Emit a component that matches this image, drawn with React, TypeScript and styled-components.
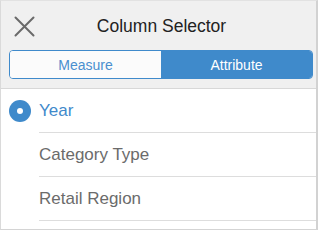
import { createGlobalStyle, styled } from "styled-components";

const GlobalStyle = createGlobalStyle`
  html, body {
    margin: 0;
    padding: 0;
    background: #ffffff;
  }
  body {
    font-family: "Liberation Sans", Arial, sans-serif;
  }
`;

const columns = ["Year", "Category Type", "Retail Region"];

export default function App() {
  const selected = "Year";

  return (
    <>
      <GlobalStyle />
      <Frame>
        <Header>
          <TopRow>
            <CloseButton aria-label="Close">
              <svg width="21" height="21" viewBox="0 0 21 21">
                <path
                  d="M1.5 1.5 L19.5 19.5 M19.5 1.5 L1.5 19.5"
                  stroke="#6a6a6a"
                  strokeWidth="2"
                  strokeLinecap="round"
                  fill="none"
                />
              </svg>
            </CloseButton>
            <Title>Column Selector</Title>
          </TopRow>
          <Segmented>
            <Segment $active={false}>Measure</Segment>
            <Segment $active={true}>Attribute</Segment>
          </Segmented>
        </Header>
        <List>
          {columns.map((name) => (
            <Row key={name}>
              <Gutter>{name === selected && <Radio />}</Gutter>
              <Label $selected={name === selected}>{name}</Label>
            </Row>
          ))}
        </List>
      </Frame>
    </>
  );
}

const Frame = styled.div`
  box-sizing: border-box;
  width: 318px;
  height: 230px;
  border-top: 1px solid #e2e2e2;
  border-left: 1px solid #dadada;
  border-right: 2px solid #d2d2d2;
  border-bottom: 1px solid #d4d4d4;
  background: #ffffff;
  overflow: hidden;
`;

const Header = styled.div`
  background: #f0f0f0;
  height: 87px;
  border-bottom: 1px solid #d8d8d8;
`;

const TopRow = styled.div`
  position: relative;
  height: 49px;
  display: flex;
  align-items: center;
  justify-content: center;
`;

const CloseButton = styled.button`
  position: absolute;
  left: 13px;
  top: 15px;
  padding: 0;
  border: none;
  background: none;
  display: flex;
`;

const Title = styled.div`
  font-size: 17.5px;
  color: #222222;
  margin-left: 6px;
  margin-top: 1px;
`;

const Segmented = styled.div`
  display: flex;
  height: 29px;
  margin: 0 3px 0 8px;
  box-sizing: border-box;
  border: 1px solid #3f8acb;
  border-radius: 4px;
  overflow: hidden;
`;

const Segment = styled.div<{ $active: boolean }>`
  flex: 1;
  display: flex;
  align-items: center;
  justify-content: center;
  font-size: 14px;
  color: ${(p) => (p.$active ? "#ffffff" : "#4a8fcf")};
  background: ${(p) => (p.$active ? "#3f8acb" : "#fbfbfb")};
`;

const List = styled.div`
  display: flex;
  flex-direction: column;
`;

const Row = styled.div`
  display: flex;
  height: 44px;
`;

const Gutter = styled.div`
  width: 38px;
  display: flex;
  align-items: center;
  justify-content: center;
`;

const Radio = styled.div`
  box-sizing: border-box;
  width: 22px;
  height: 22px;
  border-radius: 50%;
  background: #3f8acb;
  display: flex;
  align-items: center;
  justify-content: center;
  margin-right: 1px;

  &::after {
    content: "";
    width: 6px;
    height: 6px;
    border-radius: 50%;
    background: #ffffff;
  }
`;

const Label = styled.div<{ $selected: boolean }>`
  flex: 1;
  display: flex;
  align-items: center;
  border-bottom: 1px solid #dddddd;
  font-size: 17px;
  color: ${(p) => (p.$selected ? "#3f8acb" : "#6b6b6b")};
`;
